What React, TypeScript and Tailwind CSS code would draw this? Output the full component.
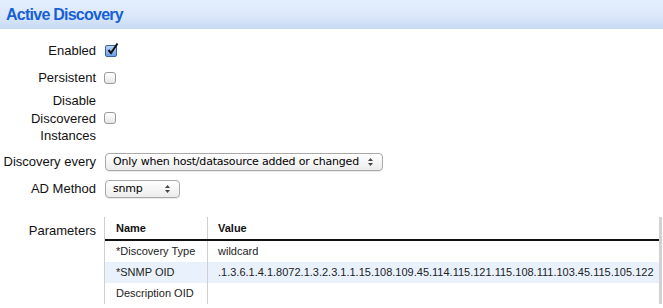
import React from "react";

const SelectArrows = () => (
  <svg width="7" height="10" viewBox="0 0 7 10" className="shrink-0">
    <path d="M1 4 L3.5 1 L6 4 Z" fill="#444" />
    <path d="M1 6 L3.5 9 L6 6 Z" fill="#444" />
  </svg>
);

const Select = ({ text, w }: { text: string; w: string }) => (
  <div
    className={`${w} h-[18px] flex items-center justify-between pl-[7px] pr-[8px] rounded-[4px] border border-[#a9a9a9] bg-gradient-to-b from-white to-[#ececec] shadow-[0_1px_0_rgba(0,0,0,0.08)] text-[11px] text-black whitespace-nowrap`}
    style={{ fontFamily: '"DejaVu Sans", sans-serif' }}
  >
    <span className="leading-none tracking-[-0.2px]">{text}</span>
    <SelectArrows />
  </div>
);

const Checkbox = ({ checked }: { checked?: boolean }) =>
  checked ? (
    <div className="relative w-[12px] h-[12px]">
      <div className="w-[12px] h-[12px] rounded-[2px] border border-[#3a5f9c] bg-gradient-to-b from-[#b9d4f6] to-[#6a9ee6]" />
      <svg width="14" height="14" viewBox="0 0 14 14" className="absolute left-[1px] top-[-3px]">
        <path d="M2.5 8 L5 11 L11.5 1.5" stroke="#111" strokeWidth="2" fill="none" strokeLinejoin="miter" />
      </svg>
    </div>
  ) : (
    <div className="w-[12px] h-[12px] rounded-[3px] border border-[#9a9a9a] bg-gradient-to-b from-white to-[#e6e6e6]" />
  );

export default function App() {
  return (
    <div
      className="w-[663px] h-[308px] overflow-hidden bg-white text-[13px] text-[#111]"
      style={{ fontFamily: '"Liberation Sans", Arial, sans-serif' }}
    >
      <div className="h-[29px] bg-gradient-to-b from-[#e3eefd] via-[#dde9fb] to-[#c6daf4] flex items-center pl-[6px]">
        <span className="font-bold text-[16px] text-[#165fd6] tracking-[-0.75px]">Active Discovery</span>
      </div>

      <div className="flex flex-col">
        <div className="flex items-center h-[18px] mt-[13px]">
          <div className="w-[96px] text-right">Enabled</div>
          <div className="ml-[9px]">
            <Checkbox checked />
          </div>
        </div>
        <div className="flex items-center h-[18px] mt-[9px]">
          <div className="w-[96px] text-right">Persistent</div>
          <div className="ml-[8px]">
            <Checkbox />
          </div>
        </div>
        <div className="flex items-center mt-[5px]">
          <div className="w-[96px] text-right leading-[17.5px]">
            Disable
            <br />
            Discovered
            <br />
            Instances
          </div>
          <div className="ml-[8px]">
            <Checkbox />
          </div>
        </div>
        <div className="flex items-center h-[18px] mt-[8px]">
          <div className="w-[96px] text-right">Discovery every</div>
          <div className="ml-[9px]">
            <Select text="Only when host/datasource added or changed" w="w-[278px]" />
          </div>
        </div>
        <div className="flex items-center h-[18px] mt-[9px]">
          <div className="w-[96px] text-right">AD Method</div>
          <div className="ml-[9px]">
            <Select text="snmp" w="w-[75px]" />
          </div>
        </div>
        <div className="flex mt-[19px]">
          <div className="w-[96px] text-right pt-[4px]">Parameters</div>
          <div className="ml-[8px] w-[558px] border-l border-[#cfcfcf] border-r-[3px] border-r-[#d2d2d2] text-[11px]">
            <div className="flex h-[24px] border-b-2 border-[#111] font-bold">
              <div className="w-[102px] pl-[11px] flex items-center pt-[1px]">Name</div>
              <div className="flex-1 border-l border-[#cfcfcf] pl-[10px] flex items-center pt-[1px]">Value</div>
            </div>
            <div className="flex h-[21px] text-[#222]">
              <div className="w-[102px] pl-[11px] flex items-center">*Discovery Type</div>
              <div className="flex-1 border-l border-[#cfcfcf] pl-[10px] flex items-center">wildcard</div>
            </div>
            <div className="flex h-[21px] bg-[#e9f2fc] text-[#222]">
              <div className="w-[102px] pl-[11px] flex items-center">*SNMP OID</div>
              <div className="flex-1 border-l border-[#cfcfcf] pl-[10px] flex items-center">
                .1.3.6.1.4.1.8072.1.3.2.3.1.1.15.108.109.45.114.115.121.115.108.111.103.45.115.105.122
              </div>
            </div>
            <div className="flex h-[21px] text-[#222]">
              <div className="w-[102px] pl-[11px] flex items-center">Description OID</div>
              <div className="flex-1 border-l border-[#cfcfcf] pl-[10px] flex items-center"></div>
            </div>
          </div>
        </div>
      </div>
    </div>
  );
}
